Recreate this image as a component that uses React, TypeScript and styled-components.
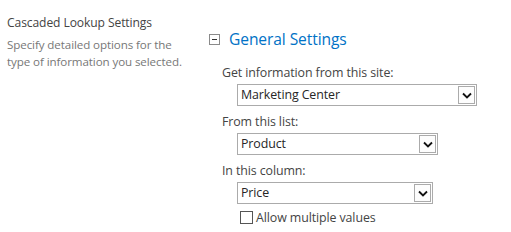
import React from 'react';
import styled, {createGlobalStyle} from "styled-components";

const GlobalStyle = createGlobalStyle`
  body {
    margin: 0;
    background: #ffffff;
    font-family: "Open Sans", "Noto Sans", sans-serif;
  }
`

type SelectPropsType = {
    value: string;
    width: number;
}

const Select = (props: SelectPropsType) => {
    return (
        <StyledSelect $width={props.width}>
            <SelectValue>{props.value}</SelectValue>
            <SelectButton>
                <svg width="10" height="7" viewBox="0 0 10 7">
                    <path d="M1 1.5 L5 5.5 L9 1.5" fill="none" stroke="#111" strokeWidth="1.8"/>
                </svg>
            </SelectButton>
        </StyledSelect>
    );
};

type FieldPropsType = {
    label: string;
    value: string;
    width: number;
}

const Field = (props: FieldPropsType) => {
    return (
        <StyledField>
            <Label>{props.label}</Label>
            <Select value={props.value} width={props.width}/>
        </StyledField>
    );
};

export default function App() {
    return (
        <>
            <GlobalStyle/>
            <Page>
                <Intro>
                    <SectionTitle>Cascaded Lookup Settings</SectionTitle>
                    <Description>Specify detailed options for the type of information you selected.</Description>
                </Intro>
                <Settings>
                    <GroupHeader>
                        <Toggle/>
                        <GroupTitle>General Settings</GroupTitle>
                    </GroupHeader>
                    <Fields>
                        <Field label="Get information from this site:" value="Marketing Center" width={240}/>
                        <Field label="From this list:" value="Product" width={201}/>
                        <Field label="In this column:" value="Price" width={196}/>
                        <CheckRow>
                            <CheckBox/>
                            <CheckLabel>Allow multiple values</CheckLabel>
                        </CheckRow>
                    </Fields>
                </Settings>
            </Page>
        </>
    );
}

const Page = styled.div`
  display: flex;
  width: 511px;
  height: 232px;
  box-sizing: border-box;
  padding: 14px 0 0 7px;
`

const Intro = styled.div`
  width: 182px;
  flex-shrink: 0;
`

const SectionTitle = styled.div`
  font-size: 12.1px;
  line-height: 17px;
  color: #444444;
  letter-spacing: -0.1px;
`

const Description = styled.div`
  margin-top: 5px;
  font-size: 11.6px;
  line-height: 17px;
  color: #777777;
  letter-spacing: -0.1px;
  width: 180px;
`

const Settings = styled.div`
  padding-left: 20px;
`

const GroupHeader = styled.div`
  display: flex;
  align-items: center;
  gap: 9px;
  margin-top: 14px;
`

const Toggle = styled.div`
  position: relative;
  width: 9px;
  height: 9px;
  border: 1px solid #8a8a8a;
  box-sizing: content-box;

  &::after {
    content: "";
    position: absolute;
    left: 2px;
    top: 4px;
    width: 5px;
    height: 1px;
    background: #333333;
  }
`

const GroupTitle = styled.div`
  font-size: 15.6px;
  line-height: 22px;
  color: #0072c6;
  letter-spacing: -0.1px;
`

const Fields = styled.div`
  display: flex;
  flex-direction: column;
  padding-left: 13px;
  margin-top: 14px;
`

const StyledField = styled.div`
  display: flex;
  flex-direction: column;
  margin-bottom: 7px;
`

const Label = styled.div`
  font-size: 12.4px;
  line-height: 17px;
  color: #444444;
  letter-spacing: -0.1px;
  margin-bottom: 3px;
`

const StyledSelect = styled.div<{ $width: number }>`
  display: flex;
  width: ${props => props.$width}px;
  height: 22px;
  box-sizing: border-box;
  margin-left: 15px;
  border: 1px solid #ababab;
  background: #ffffff;
`

const SelectValue = styled.div`
  flex: 1;
  padding-left: 3px;
  font-size: 12.4px;
  line-height: 20px;
  color: #262626;
  letter-spacing: -0.1px;
`

const SelectButton = styled.div`
  display: flex;
  align-items: center;
  justify-content: center;
  width: 17px;
  height: 18px;
  margin: 1px;
  border: 1px solid #ababab;
  background: #fdfdfd;
  box-sizing: border-box;
`

const CheckRow = styled.div`
  display: flex;
  align-items: center;
  gap: 3px;
  margin-left: 18px;
  margin-top: -2px;
`

const CheckBox = styled.div`
  width: 13px;
  height: 13px;
  box-sizing: border-box;
  border: 1px solid #555555;
  background: #ffffff;
`

const CheckLabel = styled.div`
  font-size: 12.4px;
  line-height: 17px;
  color: #444444;
  letter-spacing: -0.1px;
`
